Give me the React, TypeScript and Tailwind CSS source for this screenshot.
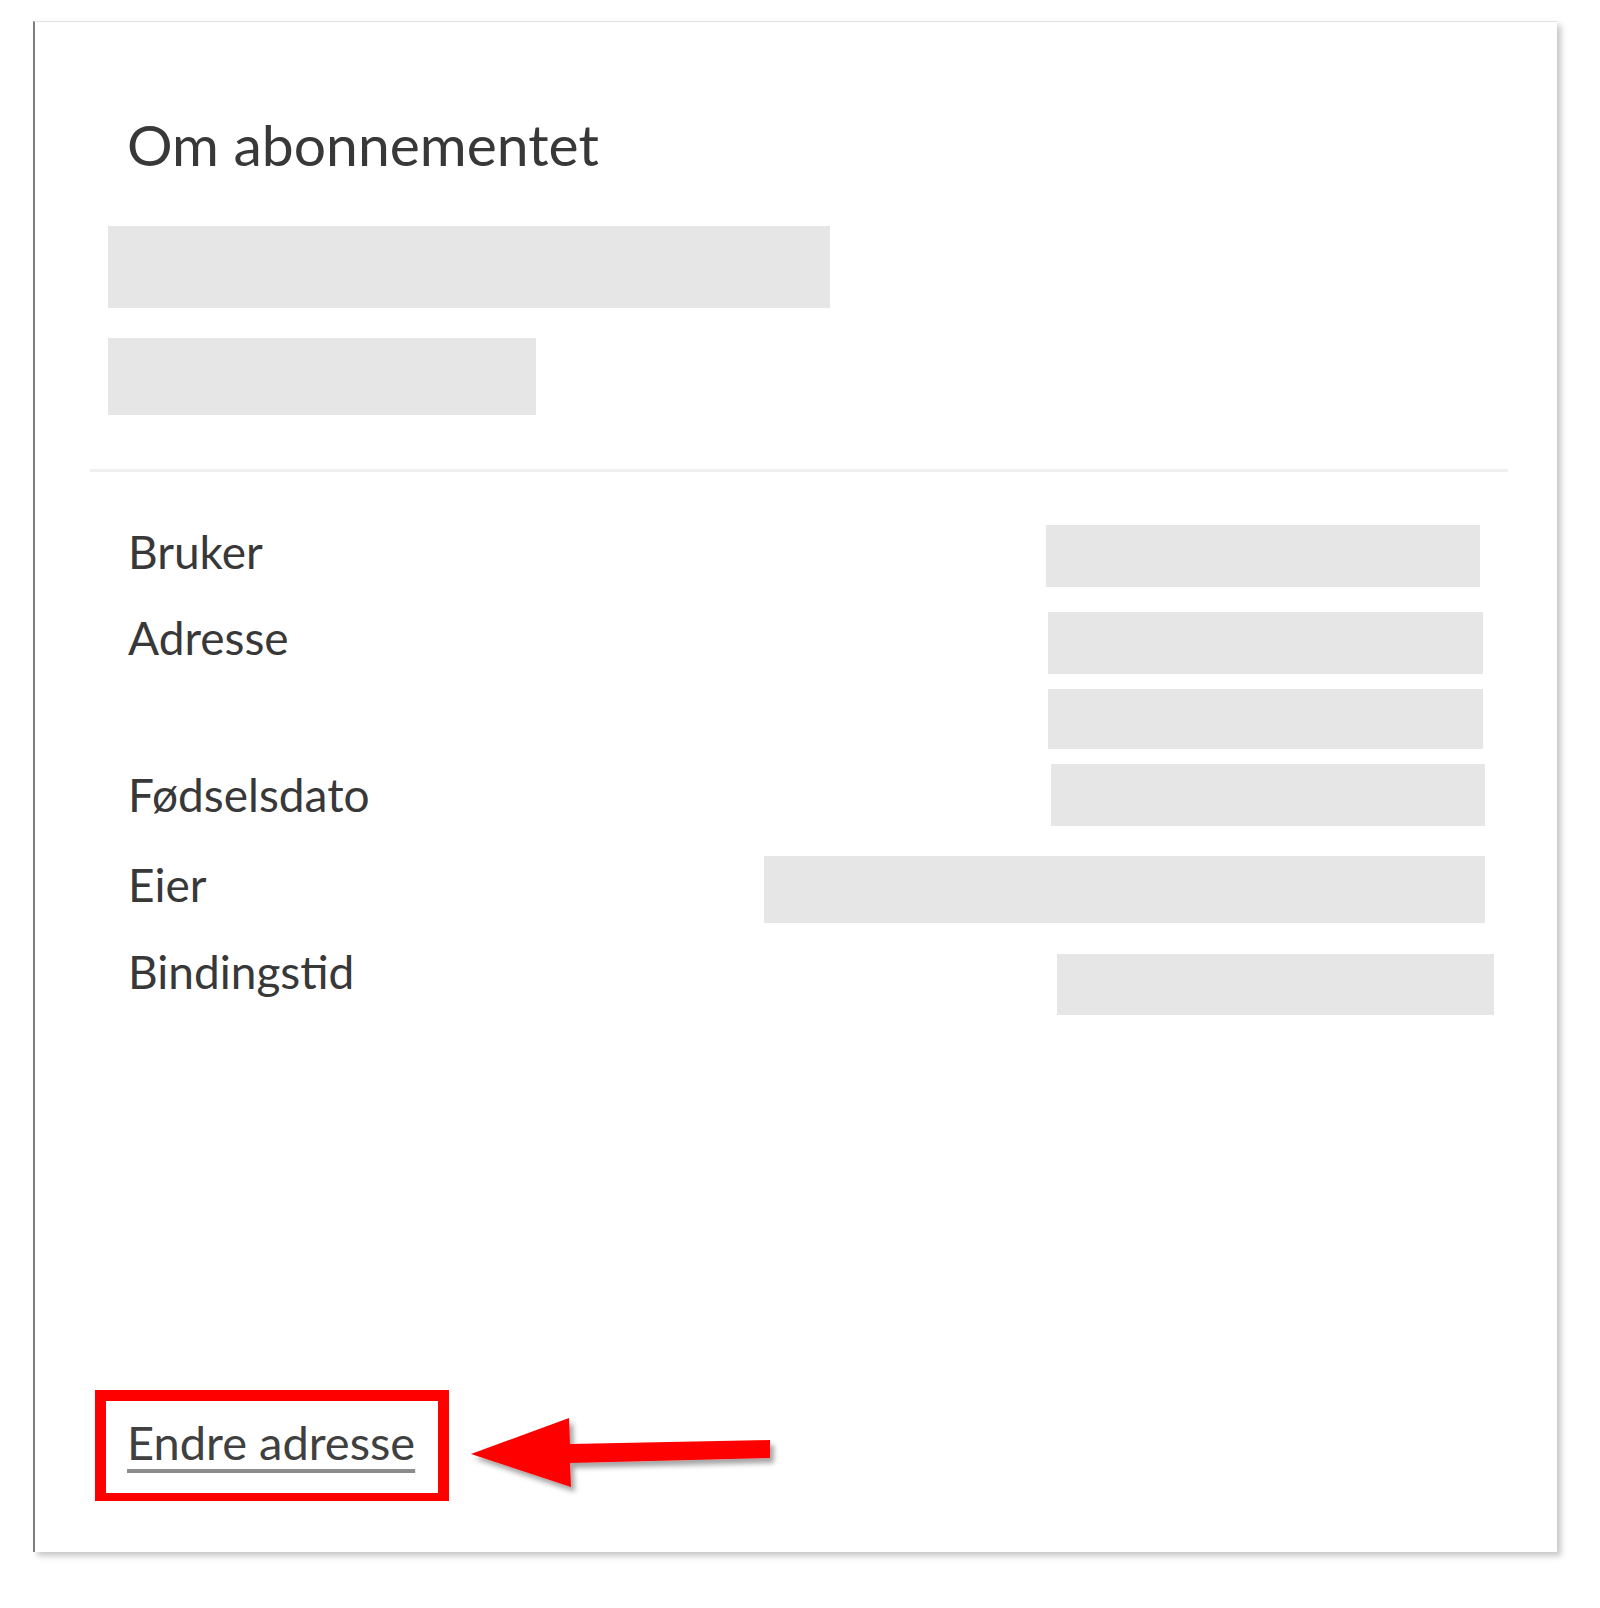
const ROWS = [
  { label: 'Bruker', labelTop: 'mt-[4px]', rowTop: 'mt-0', bars: [{ w: 'w-[434px]', h: 'h-[62px]', mr: 'mr-[77px]', mt: 'mt-0' }] },
  {
    label: 'Adresse',
    labelTop: 'mt-[3px]',
    rowTop: 'mt-[25px]',
    bars: [
      { w: 'w-[435px]', h: 'h-[62px]', mr: 'mr-[74px]', mt: 'mt-0' },
      { w: 'w-[435px]', h: 'h-[60px]', mr: 'mr-[74px]', mt: 'mt-[15px]' },
    ],
  },
  { label: 'Fødselsdato', labelTop: 'mt-[8px]', rowTop: 'mt-[15px]', bars: [{ w: 'w-[434px]', h: 'h-[62px]', mr: 'mr-[72px]', mt: 'mt-0' }] },
  { label: 'Eier', labelTop: 'mt-[6px]', rowTop: 'mt-[30px]', bars: [{ w: 'w-[721px]', h: 'h-[67px]', mr: 'mr-[72px]', mt: 'mt-0' }] },
  { label: 'Bindingstid', labelTop: 'mt-0', rowTop: 'mt-[26px]', bars: [{ w: 'w-[437px]', h: 'h-[61px]', mr: 'mr-[63px]', mt: 'mt-[5px]' }] },
];

function Arrow() {
  return (
    <svg width="330" height="92" viewBox="0 0 330 92" className="mt-[22px] ml-[14px] shrink-0">
      <defs>
        <filter id="arrowShadow" x="-10%" y="-30%" width="130%" height="170%">
          <feDropShadow dx="4" dy="5" stdDeviation="2.5" floodColor="#000" floodOpacity="0.35" />
        </filter>
      </defs>
      <path
        d="M8 42 L106 6 L107 32 L307 28 L307 46 L107 51 L108 75 Z"
        fill="#fe0000"
        filter="url(#arrowShadow)"
      />
    </svg>
  );
}

export default function App() {
  return (
    <div className="w-[1600px] h-[1608px] overflow-hidden bg-white pt-[21px] font-['Lato',sans-serif] text-[#383838]">
      <div className="ml-[33px] flex h-[1531px] w-[1524px] flex-col border-t border-l-2 border-t-[#e4e4e4] border-l-[#7e7e7e] bg-white shadow-[4px_4px_6px_rgba(0,0,0,0.22)]">
        <h1 className="ml-[92px] mt-[94px] text-[57px] leading-none font-normal">Om abonnementet</h1>

        <div className="ml-[73px] mt-[53px] h-[82px] w-[722px] bg-[#e6e6e6]" />
        <div className="ml-[73px] mt-[30px] h-[77px] w-[428px] bg-[#e6e6e6]" />

        <div className="ml-[55px] mt-[54px] h-[3px] w-[1418px] bg-[#efefef]" />

        <div className="mt-[53px] flex flex-col">
          {ROWS.map((row) => (
            <div key={row.label} className={`flex items-start justify-between ${row.rowTop}`}>
              <span className={`ml-[93px] text-[46px] leading-none ${row.labelTop}`}>{row.label}</span>
              <div className="flex flex-col">
                {row.bars.map((b, i) => (
                  <div key={i} className={`${b.w} ${b.h} ${b.mr} ${b.mt} bg-[#e6e6e6]`} />
                ))}
              </div>
            </div>
          ))}
        </div>

        <div className="mt-auto mb-[48px] ml-[60px] flex items-start">
          <div className="border-[11px] border-b-[8px] border-[#fe0000] pl-[21px] pr-[23px] pt-[18px] pb-[27px]">
            <a
              href="#"
              className="block text-[47px] leading-none text-[#404040] underline decoration-[#8c8c8c] decoration-[4px] underline-offset-[9px]"
            >
              Endre adresse
            </a>
          </div>
          <Arrow />
        </div>
      </div>
    </div>
  );
}
